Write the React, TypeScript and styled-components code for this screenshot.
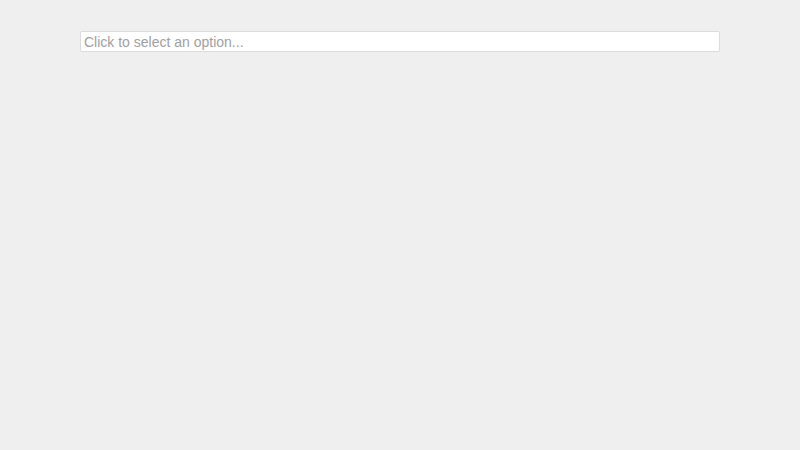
import React from "react"
import styled, { createGlobalStyle } from "styled-components"

const GlobalStyle = createGlobalStyle`
  html, body {
    margin: 0;
    padding: 0;
    background: #efefef;
    font-family: "Liberation Sans", Arial, sans-serif;
  }
`

const Page = styled.div`
  width: 100%;
  min-height: 450px;
  padding-top: 31px;
  box-sizing: border-box;
  display: flex;
  justify-content: center;
`

const SelectBox = styled.div`
  width: 640px;
  height: 21px;
  box-sizing: border-box;
  background: #ffffff;
  border: 1px solid #dcdcdc;
  border-radius: 2px;
  padding: 0 3px;
  display: flex;
  align-items: center;
  cursor: text;
`

const Placeholder = styled.span`
  font-size: 14px;
  color: #a0a0a0;
  line-height: 1;
`

function App(): JSX.Element {
  return (
    <>
      <GlobalStyle />
      <Page>
        <SelectBox>
          <Placeholder>Click to select an option...</Placeholder>
        </SelectBox>
      </Page>
    </>
  )
}

export default App
